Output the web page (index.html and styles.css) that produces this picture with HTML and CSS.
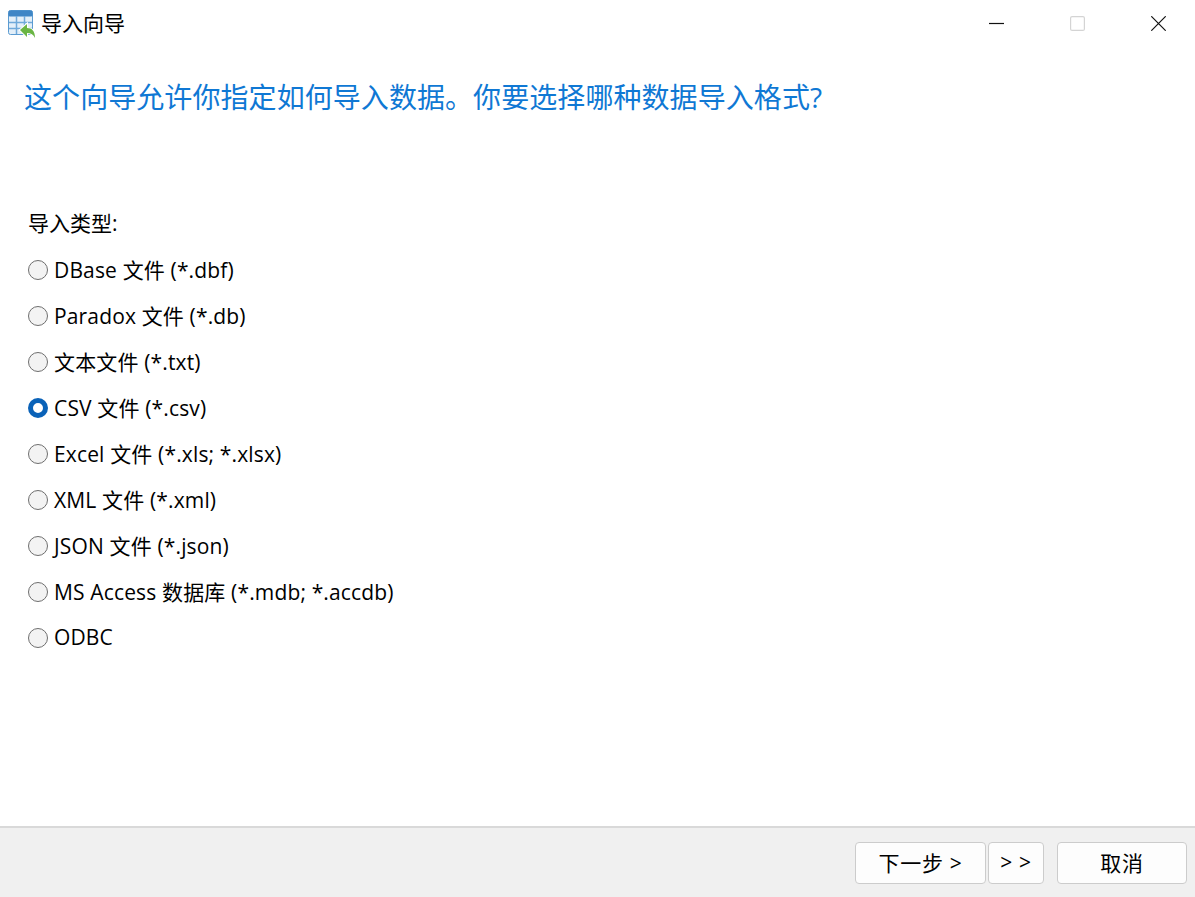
FILE: index.html
```html
<!DOCTYPE html>
<html lang="zh-CN">
  <head>
    <meta charset="UTF-8" />
    <meta name="viewport" content="width=device-width, initial-scale=1.0" />
    <title>导入向导</title>
    <link rel="stylesheet" href="styles.css">
  </head>
  <body>
    <div class="window">
      <header class="titlebar">
        <div class="title">
          <svg class="app-icon" width="29" height="29" viewBox="0 0 29 29">
            <rect x="0.5" y="0.5" width="24" height="24" rx="2" fill="#e3eff9" stroke="#5b9bd1"/>
            <rect x="0.5" y="0.5" width="24" height="6" rx="1.5" fill="#3f86c6"/>
            <path d="M8.5 6v18M16.5 6v18M1 12.5h23M1 18.5h23" stroke="#6fa9da" stroke-width="1.5" fill="none"/>
            <path d="M12 20l7-6v4c5 0 8 3 8 10-1.5-3.5-4-5-8-5v4z" fill="#fff" stroke="#fff" stroke-width="2"/>
            <path d="M12 20l7-6v4c5 0 8 3 8 10-1.5-3.5-4-5-8-5v4z" fill="#6ab544"/>
          </svg>
          <span class="title-text">导入向导</span>
        </div>
        <div class="window-controls">
          <svg width="15" height="15" viewBox="0 0 15 15"><path d="M0 7.5h15" stroke="#111" stroke-width="1.2"/></svg>
          <svg width="15" height="15" viewBox="0 0 15 15"><rect x="0.6" y="0.6" width="13.8" height="13.8" rx="1.5" fill="none" stroke="#d4d4d4" stroke-width="1.2"/></svg>
          <svg width="15" height="15" viewBox="0 0 15 15"><path d="M0.3 0.3l14.4 14.4M14.7 0.3l-14.4 14.4" stroke="#111" stroke-width="1.2"/></svg>
        </div>
      </header>

      <main class="content">
        <h1>这个向导允许你指定如何导入数据。你要选择哪种数据导入格式?</h1>
        <p class="group-label">导入类型:</p>
        <ul class="options">
          <li><span class="radio"></span>DBase 文件 (*.dbf)</li>
          <li><span class="radio"></span>Paradox 文件 (*.db)</li>
          <li><span class="radio"></span>文本文件 (*.txt)</li>
          <li><span class="radio checked"></span>CSV 文件 (*.csv)</li>
          <li><span class="radio"></span>Excel 文件 (*.xls; *.xlsx)</li>
          <li><span class="radio"></span>XML 文件 (*.xml)</li>
          <li><span class="radio"></span>JSON 文件 (*.json)</li>
          <li><span class="radio"></span>MS Access 数据库 (*.mdb; *.accdb)</li>
          <li><span class="radio"></span>ODBC</li>
        </ul>
      </main>

      <footer class="footer">
        <button class="btn">下一步 &gt;</button>
        <button class="btn btn-small">&gt; &gt;</button>
        <button class="btn btn-cancel">取消</button>
      </footer>
    </div>
  </body>
</html>
```

FILE: styles.css
```css
* {
  box-sizing: border-box;
}

html,
body {
  height: 100%;
}

body {
  margin: 0;
  background: #fff;
  color: #000;
  font-family: "Open Sans", "Noto Sans CJK SC", sans-serif;
  font-size: 21px;
  overflow: hidden;
}

.window {
  display: flex;
  flex-direction: column;
  height: 897px;
}

.titlebar {
  display: flex;
  justify-content: space-between;
  align-items: center;
  height: 46px;
  padding-left: 8px;
  flex-shrink: 0;
}

.title {
  display: flex;
  align-items: center;
  gap: 4px;
}

.app-icon {
  margin-top: 2px;
}

.title-text {
  margin-bottom: 2px;
}

.window-controls {
  display: flex;
  align-items: center;
  gap: 66px;
  padding-right: 29px;
  padding-top: 1px;
}

.content {
  flex: 1;
  padding-left: 24px;
}

h1 {
  margin: 30px 0 0;
  font-size: 28px;
  font-weight: 400;
  line-height: 42px;
  letter-spacing: 0.07px;
  color: #0f78d4;
}

.group-label {
  margin: 91px 0 0 4px;
  line-height: 28px;
}

.options {
  list-style: none;
  margin: 9px 0 0 4px;
  padding: 0;
  letter-spacing: 0.15px;
}

.options li {
  display: flex;
  align-items: center;
  gap: 6px;
  height: 46px;
}

.radio {
  width: 20px;
  height: 20px;
  margin-top: 1px;
  border: 1px solid #6e6e6e;
  border-radius: 50%;
  background: #f3f3f3;
  flex-shrink: 0;
}

.radio.checked {
  border: 5.5px solid #0a62b8;
  background: #fff;
}

.footer {
  display: flex;
  align-items: center;
  height: 71px;
  padding: 0 8px 0 855px;
  background: #f0f0f0;
  border-top: 2px solid #d9d9d9;
  flex-shrink: 0;
}

.btn {
  width: 131px;
  height: 42px;
  background: #fdfdfd;
  border: 1px solid #cccccc;
  border-radius: 4px;
  font-family: inherit;
  font-size: 21px;
  letter-spacing: 0.7px;
  color: #000;
  padding: 0 0 2px;
}

.btn-small {
  width: 56px;
  margin-left: 2px;
}

.btn-cancel {
  margin-left: 13px;
  width: 130px;
}
```
